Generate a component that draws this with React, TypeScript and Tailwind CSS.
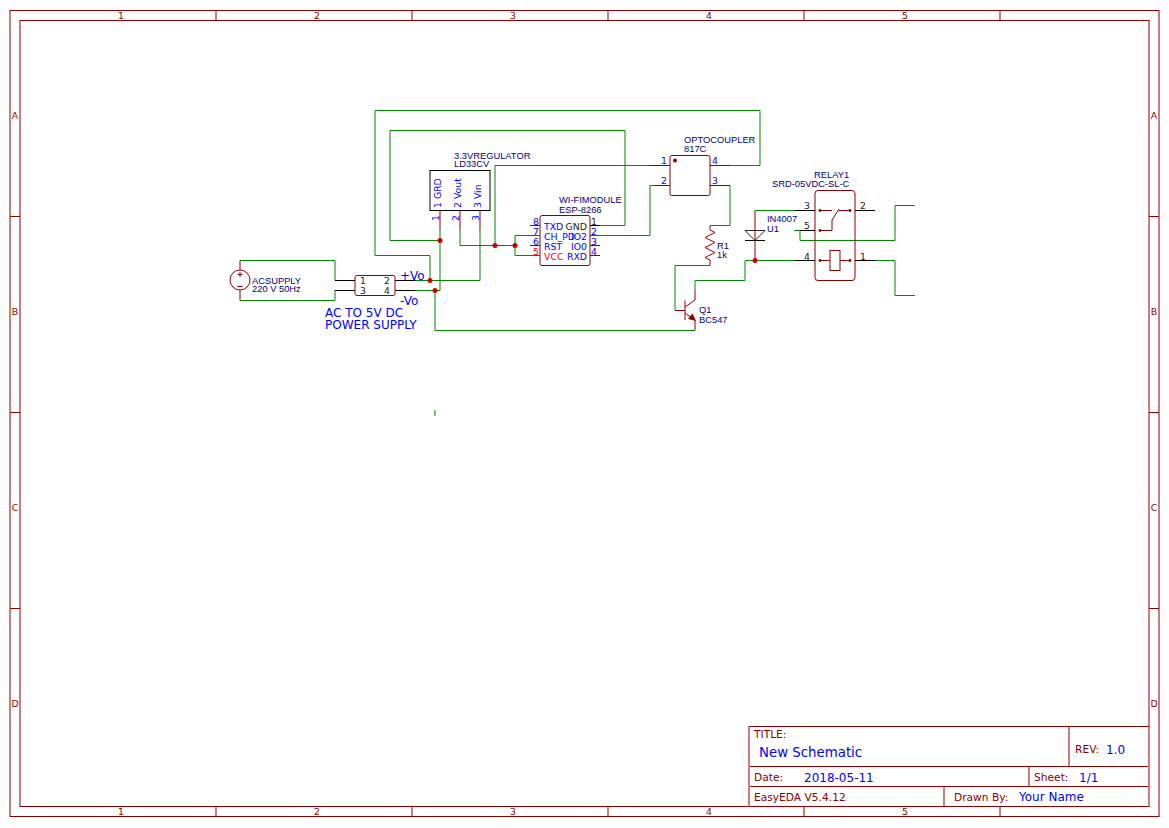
import React from "react";

const MAROON = "#8b0000";
const GREEN = "#008800";
const NAVY = "#000080";
const BLUE = "#0000ff";
const GRAY = "#222222";
const RED = "#ff0000";

const W = ({ p }: { p: string }) => <polyline points={p} fill="none" stroke={GREEN} strokeWidth={1} />;
const M = ({ p }: { p: string }) => <polyline points={p} fill="none" stroke={MAROON} strokeWidth={1} />;
const K = ({ p }: { p: string }) => <polyline points={p} fill="none" stroke="#000000" strokeWidth={1} />;
const J = ({ x, y }: { x: number; y: number }) => <circle cx={x} cy={y} r={2.5} fill="#cc0000" />;
const T = ({ x, y, c = BLUE, s = 9.33, a = "start", t, rot }: { x: number; y: number; c?: string; s?: number; a?: "start" | "middle" | "end"; t: string; rot?: boolean }) => (
  <text x={x} y={y} fill={c} fontSize={s} textAnchor={a} transform={rot ? `rotate(-90 ${x} ${y})` : undefined}>
    {t}
  </text>
);
/* part names and values are set in the Arial-metric face */
const L = ({ x, y, t }: { x: number; y: number; t: string }) => (
  <text x={x} y={y} fill={NAVY} fontSize={9.33} className="font-['Liberation_Sans',Arial,sans-serif]">
    {t}
  </text>
);

const colTicks = [216, 412, 608, 804, 1000];
const rowTicks = [216.5, 412.5, 608.5];
const cols = [[121, "1"], [317, "2"], [513, "3"], [709, "4"], [905, "5"]] as const;
const rows = [[119, "A"], [315, "B"], [511, "C"], [707, "D"]] as const;

function Schematic() {
  return (
    <svg width={1169} height={828} viewBox="0 0 1169 828" className="absolute inset-0 block">
      {/* sheet frame */}
      <rect x={10} y={10.5} width={1149} height={806} fill="none" stroke={MAROON} />
      <rect x={20} y={20.5} width={1129} height={786} fill="none" stroke={MAROON} />
      {colTicks.map((x) => (
        <g key={x}>
          <M p={`${x},10.5 ${x},20.5`} />
          <M p={`${x},806.5 ${x},816.5`} />
        </g>
      ))}
      {rowTicks.map((y) => (
        <g key={y}>
          <M p={`10,${y} 20,${y}`} />
          <M p={`1149,${y} 1159,${y}`} />
        </g>
      ))}
      {cols.map(([x, t]) => (
        <g key={t}>
          <T x={x} y={19} c={MAROON} a="middle" t={t} />
          <T x={x} y={815} c={MAROON} a="middle" t={t} />
        </g>
      ))}
      {rows.map(([y, t]) => (
        <g key={t}>
          <T x={15} y={y} c={MAROON} a="middle" t={t} />
          <T x={1154} y={y} c={MAROON} a="middle" t={t} />
        </g>
      ))}

      {/* wires */}
      <W p="240,260.5 335,260.5 335,280.5" />
      <W p="240,300.5 335,300.5 335,290.5" />
      <W p="415,280.5 480,280.5 480,230" />
      <W p="415,290.5 440,290.5 440,230" />
      <W p="430,280.5 430,255.5 375,255.5 375,110.5 760,110.5 760,165.5 730,165.5" />
      <W p="440,240.5 390,240.5 390,130.5 625,130.5 625,225.5 600,225.5" />
      <W p="460,230 460,245.5 515,245.5" />
      <W p="495,245.5 495,165.5 650,165.5" />
      <W p="540,235.5 515,235.5 515,255.5 540,255.5" />
      <W p="590,235.5 650,235.5 650,185.5 655,185.5" />
      <W p="730,185.5 730,225.5 710,225.5" />
      <W p="710,265.5 675,265.5 675,310.5" />
      <W p="435,290.5 435,330.5 695,330.5" />
      <W p="695,290 695,280.5 745,280.5 745,260.5 795,260.5" />
      <W p="755,210.5 795,210.5" />
      <W p="794,230.5 800,230.5 800,240.5 895,240.5 895,205.5 915,205.5" />
      <W p="875,260.5 895,260.5 895,295.5 915,295.5" />
      <W p="435,410 435,416" />

      {/* AC source */}
      <M p="240,260.5 240,270" />
      <M p="240,290 240,300.5" />
      <circle cx={240} cy={280} r={10} fill="none" stroke={MAROON} />
      <M p="237.5,274.5 242.5,274.5" />
      <M p="240,272 240,277" />
      <M p="237.5,286.5 242.5,286.5" />
      <L x={252} y={284} t="ACSUPPLY" />
      <L x={252} y={292} t="220 V 50Hz" />

      {/* AC-DC module */}
      <rect x={355} y={275.5} width={40} height={20} rx={2} fill="none" stroke={MAROON} />
      <K p="335,280.5 355,280.5" />
      <K p="335,290.5 355,290.5" />
      <K p="395,280.5 415,280.5" />
      <K p="395,290.5 415,290.5" />
      <T x={363} y={284} c={GRAY} t="1" a="middle" />
      <T x={363} y={294} c={GRAY} t="3" a="middle" />
      <T x={387} y={284} c={GRAY} t="2" a="middle" />
      <T x={387} y={294} c={GRAY} t="4" a="middle" />
      <T x={400} y={280} s={12} t="+Vo" />
      <T x={400} y={305} s={12} t="-Vo" />
      <T x={325} y={317} s={12} t="AC TO 5V DC" />
      <T x={325} y={329} s={12} t="POWER SUPPLY" />

      {/* regulator */}
      <rect x={430} y={170.5} width={60} height={40} fill="none" stroke="#000000" />
      <M p="440,210.5 440,230" />
      <M p="460,210.5 460,230" />
      <M p="480,210.5 480,230" />
      <L x={454} y={159} t="3.3VREGULATOR" />
      <L x={454} y={167} t="LD33CV" />
      <T x={440.5} y={208} rot t="1 GRD" />
      <T x={460.5} y={208} rot t="2 Vout" />
      <T x={480.5} y={208} rot t="3 Vin" />
      <T x={439} y={221} rot t="1" />
      <T x={459} y={221} rot t="2" />
      <T x={479} y={221} rot t="3" />

      {/* ESP-8266 */}
      <rect x={540} y={215.5} width={50} height={50} rx={2} fill="none" stroke={MAROON} />
      <M p="530,225.5 540,225.5" />
      <M p="530,245.5 540,245.5" />
      <K p="590,225.5 600,225.5" />
      <M p="590,245.5 600,245.5" />
      <M p="590,255.5 600,255.5" />
      <L x={559} y={203} t="WI-FIMODULE" />
      <L x={559} y={213} t="ESP-8266" />
      <T x={544} y={230} t="TXD" />
      <T x={544} y={240} t="CH_PD" />
      <T x={544} y={250} t="RST" />
      <T x={544} y={260} c={RED} t="VCC" />
      <T x={587} y={230} c={GRAY} a="end" t="GND" />
      <T x={587} y={240} a="end" t="IO2" />
      <T x={587} y={250} a="end" t="IO0" />
      <T x={587} y={260} a="end" t="RXD" />
      <T x={539} y={225} a="end" t="8" />
      <T x={539} y={235} a="end" t="7" />
      <T x={539} y={245} a="end" t="6" />
      <T x={539} y={255} c={RED} a="end" t="5" />
      <T x={591} y={225} c={GRAY} t="1" />
      <T x={591} y={235} t="2" />
      <T x={591} y={245} t="3" />
      <T x={591} y={255} t="4" />

      {/* optocoupler */}
      <rect x={670} y={155.5} width={40} height={40} rx={2} fill="none" stroke={MAROON} />
      <circle cx={675} cy={160.5} r={2} fill={MAROON} />
      <M p="650,165.5 670,165.5" />
      <M p="655,185.5 670,185.5" />
      <M p="710,165.5 730,165.5" />
      <M p="710,185.5 730,185.5" />
      <L x={684} y={143} t="OPTOCOUPLER" />
      <L x={684} y={152} t="817C" />
      <T x={667} y={164} a="end" t="1" />
      <T x={667} y={184} a="end" t="2" />
      <T x={712} y={164} t="4" />
      <T x={712} y={184} t="3" />

      {/* R1 */}
      <M p="710,225.5 710,230 715,232.5 705,237.5 715,242.5 705,247.5 715,252.5 705,257.5 710,260 710,265.5" />
      <L x={717} y={249} t="R1" />
      <L x={717} y={258} t="1k" />

      {/* Q1 */}
      <M p="675,310.5 685,310.5" />
      <M p="685,300.5 685,320" />
      <M p="685,307 695,300 695,290" />
      <M p="685,313 695,320 695,330.5" />
      <polygon points="696,321 688,319 692.5,313.5" fill={MAROON} />
      <L x={699} y={313} t="Q1" />
      <L x={699} y={323} t="BC547" />

      {/* diode */}
      <M p="755,210.5 755,260.5" />
      <polygon points="745,230.5 765,230.5 755,240.5" fill="none" stroke={GRAY} />
      <K p="745,240.5 765,240.5" />
      <L x={767} y={222} t="IN4007" />
      <L x={767} y={232} t="U1" />

      {/* junctions */}
      <J x={430} y={280.5} />
      <J x={440} y={240.5} />
      <J x={435} y={290.5} />
      <J x={495} y={245.5} />
      <J x={515} y={245.5} />
      <J x={755} y={260.5} />

      {/* relay */}
      <rect x={815} y={190.5} width={40} height={90} rx={3} fill="none" stroke={MAROON} />
      <K p="795,210.5 815,210.5" />
      <K p="800,230.5 815,230.5" />
      <K p="795,260.5 815,260.5" />
      <K p="855,210.5 875,210.5" />
      <K p="855,260.5 875,260.5" />
      <M p="820,210.5 832,210.5" />
      <M p="839,210.5 850,210.5" />
      <M p="820,230.5 832,230.5 832,220 839,209" />
      <M p="820,260.5 830,260.5" />
      <M p="840,260.5 850,260.5" />
      <rect x={830} y={250.5} width={10} height={20} fill="none" stroke={MAROON} />
      <circle cx={820} cy={210.5} r={1.4} fill={MAROON} />
      <circle cx={850} cy={210.5} r={1.4} fill={MAROON} />
      <circle cx={820} cy={230.5} r={1.4} fill={MAROON} />
      <circle cx={820} cy={260.5} r={1.4} fill={MAROON} />
      <circle cx={850} cy={260.5} r={1.4} fill={MAROON} />
      <L x={814} y={178} t="RELAY1" />
      <L x={772} y={187} t="SRD-05VDC-SL-C" />
      <T x={807} y={209} c={GRAY} a="middle" t="3" />
      <T x={807} y={229} c={GRAY} a="middle" t="5" />
      <T x={807} y={260} c={GRAY} a="middle" t="4" />
      <T x={863} y={209} c={GRAY} a="middle" t="2" />
      <T x={863} y={260} c={GRAY} a="middle" t="1" />
    </svg>
  );
}

function TitleBlock() {
  const label = "text-[10.67px] leading-[14px] text-[#8b0000]";
  const value = "text-[12px] leading-[14px] text-[#0000ff]";
  return (
    <div className="relative flex flex-col w-[402px] h-[81px] border-y border-y-[#8b0000] border-x-2 border-x-[#c58080]">
      <div className="flex h-[40px] border-b border-b-[#8b0000]">
        <div className="w-[320px] flex flex-col border-r-2 border-r-[#c58080]">
          <span className={`${label} pl-[4px] pt-[1px]`}>TITLE:</span>
          <span className="mt-[3px] pl-[9px] text-[13.33px] leading-[15px] text-[#0000ff]">New Schematic</span>
        </div>
        <div className="flex-1 flex items-start pt-[16px] pl-[5px]">
          <span className={`${label} w-[31px]`}>REV:</span>
          <span className={value}>1.0</span>
        </div>
      </div>
      <div className="flex h-[20px] border-b border-b-[#8b0000]">
        <div className="w-[280px] flex items-start border-r-2 border-r-[#c58080] pl-[4px]">
          <span className={`${label} w-[50px] pt-[4px]`}>Date:</span>
          <span className={`${value} pt-[4px]`}>2018-05-11</span>
        </div>
        <div className="flex-1 flex items-start pl-[4px]">
          <span className={`${label} w-[45px] pt-[4px]`}>Sheet:</span>
          <span className={`${value} pt-[4px]`}>1/1</span>
        </div>
      </div>
      <div className="flex flex-1">
        <div className="w-[195px] border-r-2 border-r-[#c58080] pl-[4px]">
          <span className={`${label} block pt-[4px]`}>EasyEDA V5.4.12</span>
        </div>
        <div className="flex-1 flex items-start pl-[9px]">
          <span className={`${label} w-[65px] pt-[4px]`}>Drawn By:</span>
          <span className={`${value} pt-[3px]`}>Your Name</span>
        </div>
      </div>
    </div>
  );
}

export default function App() {
  return (
    <div className="relative flex items-end justify-end w-[1169px] h-[828px] pr-[19px] pb-[21px] bg-white overflow-hidden font-['DejaVu_Sans',sans-serif]">
      <Schematic />
      <TitleBlock />
    </div>
  );
}
